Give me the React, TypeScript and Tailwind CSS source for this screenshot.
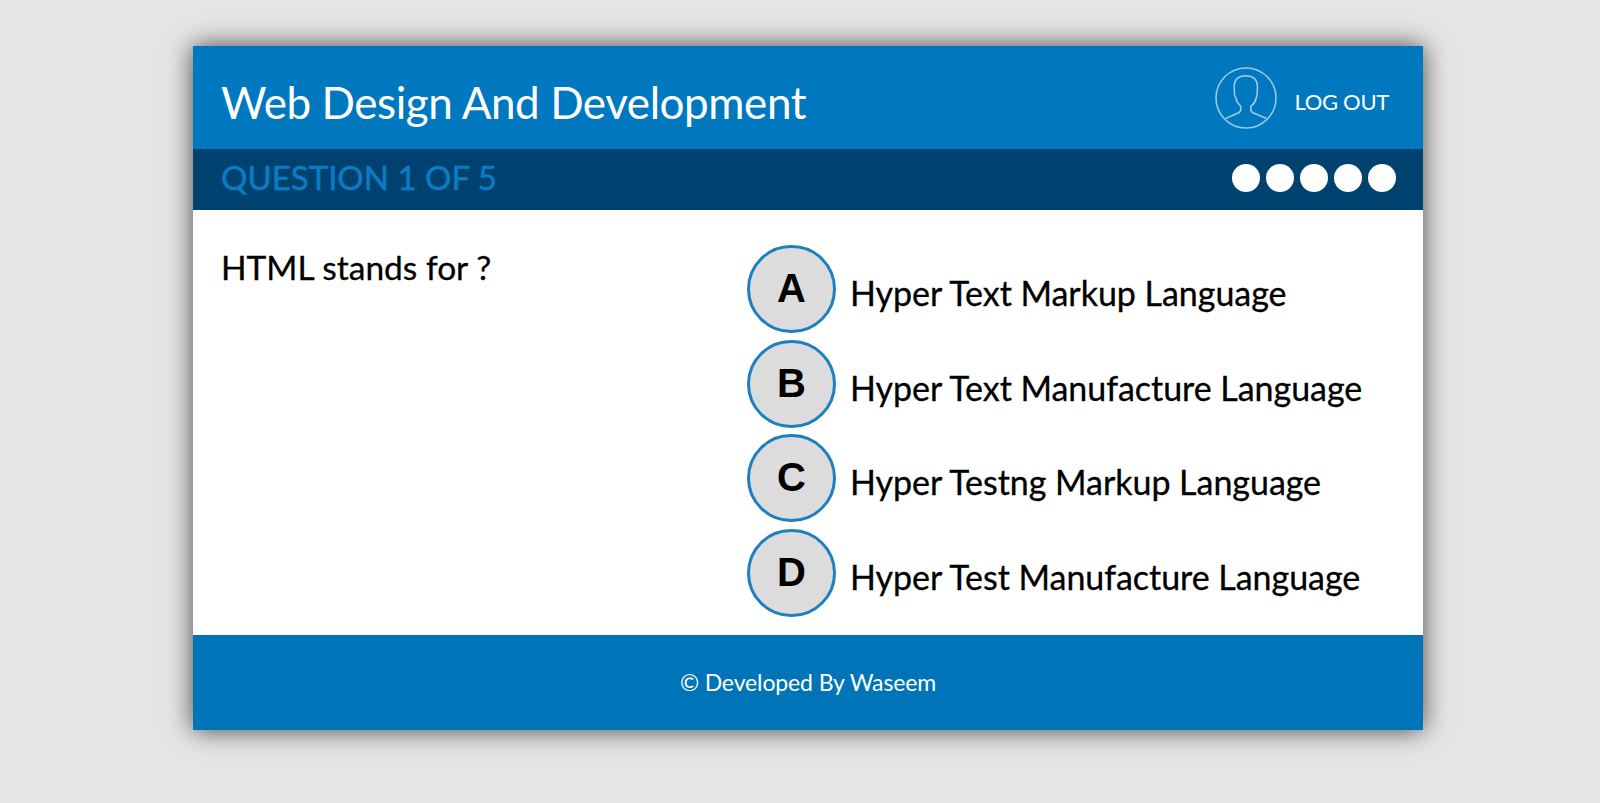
const options = [
  { letter: 'A', text: 'Hyper Text Markup Language' },
  { letter: 'B', text: 'Hyper Text Manufacture Language' },
  { letter: 'C', text: 'Hyper Testng Markup Language' },
  { letter: 'D', text: 'Hyper Test Manufacture Language' },
];

function Avatar() {
  return (
    <svg viewBox="0 0 62 62" className="w-[62px] h-[62px]" fill="none" stroke="#9cc9e6" strokeWidth="1.6">
      <circle cx="31" cy="31" r="30" />
      <path d="M10.5 51.5 L23 46 Q25.8 44.8 25.8 42.5 L25.6 39 Q21.5 35.5 20.8 31 Q19 28 19.4 25 L19.2 19 Q19.5 9 30.8 8.8 Q42 9 42.4 19 L42.2 25 Q42.6 28 41.2 31 Q40.4 35.5 36.2 39 L35.8 42.5 Q35.8 44.8 38.6 46 L51.5 51.5" />
    </svg>
  );
}

export default function App() {
  return (
    <div className="min-h-[803px] bg-[#e5e5e5] pt-[46px] pl-[193px] font-['Lato',sans-serif] overflow-hidden">
      <div className="w-[1230px] bg-white shadow-[0_0_24px_rgba(0,0,0,0.7)]">
        <header className="h-[103px] bg-[#0078bf] pl-7 flex items-center justify-between">
          <h1 className="text-[44px] text-white leading-none tracking-[-0.43px] pt-2">Web Design And Development</h1>
          <div className="flex items-center gap-[17px] pr-[34px]">
            <Avatar />
            <a className="text-[22px] text-white tracking-[-0.3px] pt-2">LOG OUT</a>
          </div>
        </header>
        <div className="h-[61px] bg-[#00426f] pl-7 pr-[27px] pb-1 flex items-center justify-between">
          <span className="text-[33px] text-[#0a7cc4] leading-none [-webkit-text-stroke:0.5px_#0a7cc4]">QUESTION 1 OF 5</span>
          <div className="flex gap-[6px]">
            {[0, 1, 2, 3, 4].map((i) => (
              <span key={i} className="w-7 h-7 rounded-full bg-white" />
            ))}
          </div>
        </div>
        <main className="h-[425px] flex">
          <p className="w-[554px] pl-7 pt-[36px] text-[33.5px] leading-[42px] text-black [-webkit-text-stroke:0.3px_#000]">HTML stands for ?</p>
          <ul className="pt-[35px] flex flex-col gap-[6.6px]">
            {options.map((o) => (
              <li key={o.letter} className="flex items-center gap-[14px] h-[88px]">
                <span className="w-[89px] h-[88px] rounded-full bg-[#dcdcdc] border-[3px] border-[#1a80bf] flex items-center justify-center pb-[2px] text-[40px] font-bold font-['Liberation_Sans',sans-serif] text-black">
                  {o.letter}
                </span>
                <span className="text-[34px] text-black pt-[7px] tracking-[-0.04px] [-webkit-text-stroke:0.3px_#000]">{o.text}</span>
              </li>
            ))}
          </ul>
        </main>
        <footer className="h-[95px] bg-[#0074b9] flex items-center justify-center">
          <span className="text-[23px] text-white tracking-[-0.12px]">© Developed By Waseem</span>
        </footer>
      </div>
    </div>
  );
}
